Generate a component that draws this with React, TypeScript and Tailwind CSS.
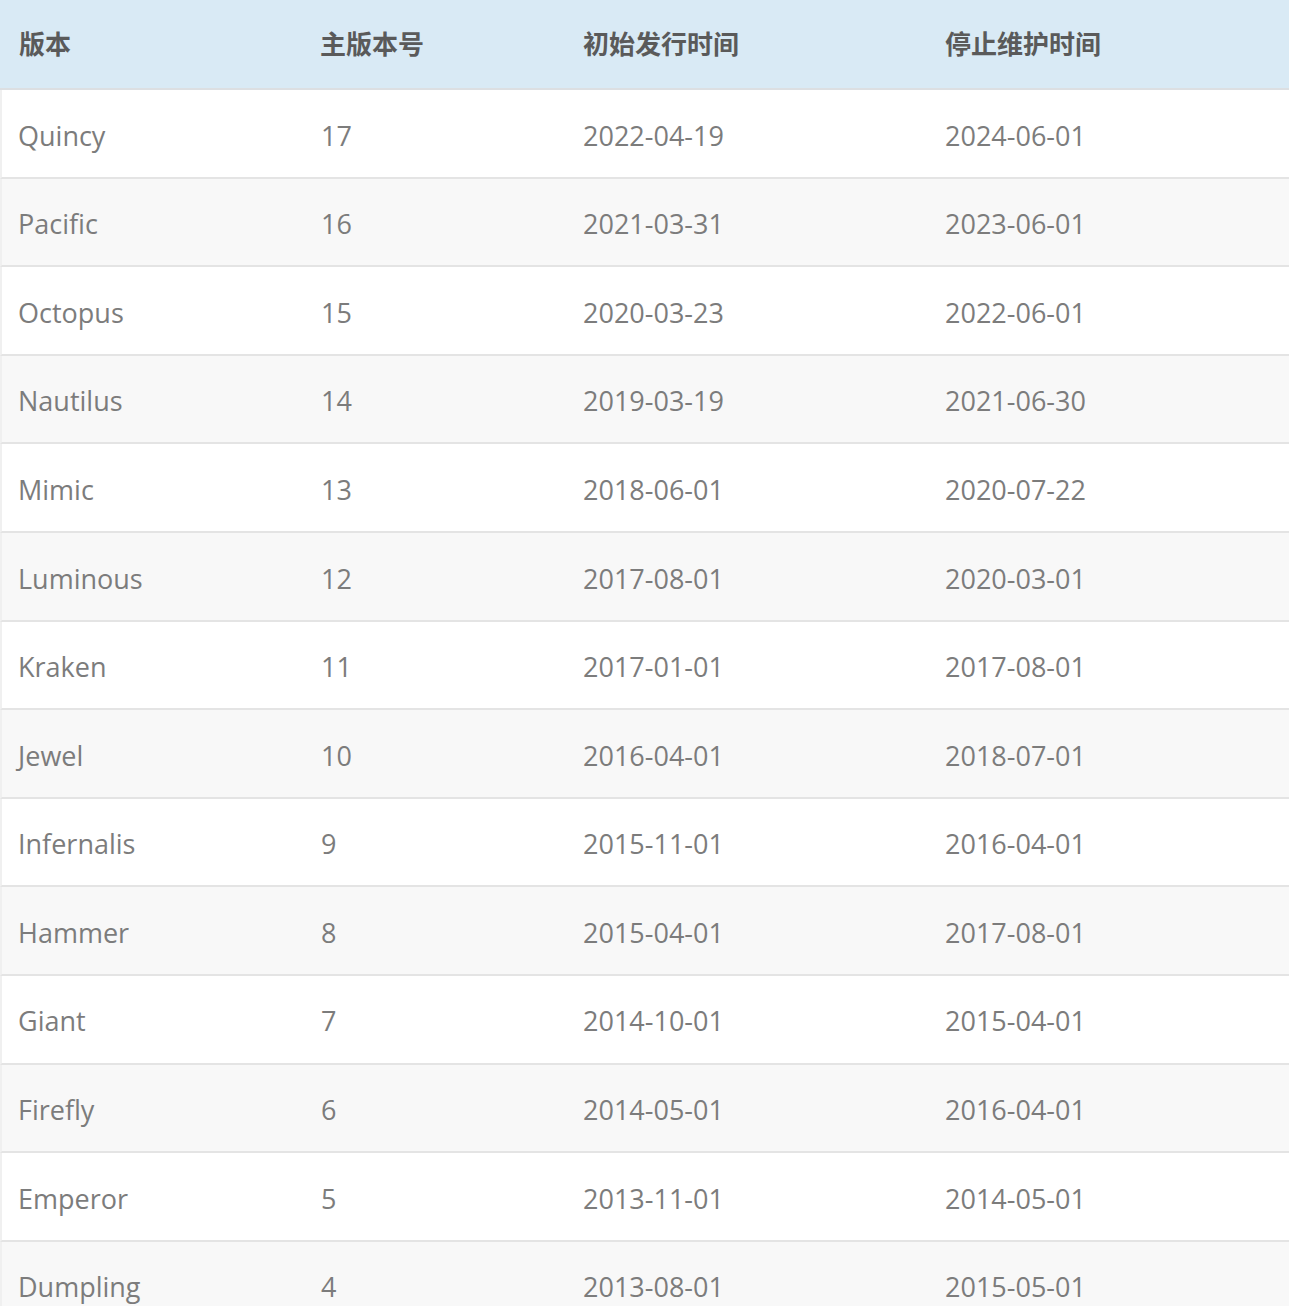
const rows: [string, string, string, string][] = [
  ["Quincy", "17", "2022-04-19", "2024-06-01"],
  ["Pacific", "16", "2021-03-31", "2023-06-01"],
  ["Octopus", "15", "2020-03-23", "2022-06-01"],
  ["Nautilus", "14", "2019-03-19", "2021-06-30"],
  ["Mimic", "13", "2018-06-01", "2020-07-22"],
  ["Luminous", "12", "2017-08-01", "2020-03-01"],
  ["Kraken", "11", "2017-01-01", "2017-08-01"],
  ["Jewel", "10", "2016-04-01", "2018-07-01"],
  ["Infernalis", "9", "2015-11-01", "2016-04-01"],
  ["Hammer", "8", "2015-04-01", "2017-08-01"],
  ["Giant", "7", "2014-10-01", "2015-04-01"],
  ["Firefly", "6", "2014-05-01", "2016-04-01"],
  ["Emperor", "5", "2013-11-01", "2014-05-01"],
  ["Dumpling", "4", "2013-08-01", "2015-05-01"],
];

const cols = "grid grid-cols-[301px_263px_362px_1fr]";

export default function App() {
  return (
    <div className="w-[1289px] h-[1306px] overflow-hidden bg-white font-['Open_Sans','Noto_Sans_CJK_SC',sans-serif]">
      <div className={`${cols} h-[90px] items-center bg-[#d9eaf5] border-b-2 border-[#dcdfe2] text-[26px] font-bold text-[#5a5a5a]`}>
        <div className="pl-[19px]">版本</div>
        <div className="pl-[19px]">主版本号</div>
        <div className="pl-[19px]">初始发行时间</div>
        <div className="pl-[19px]">停止维护时间</div>
      </div>
      {rows.map((r, i) => (
        <div
          key={r[0]}
          className={`${cols} h-[88.6px] items-center pt-[5px] border-b-2 border-[#e4e4e4] border-l-2 border-l-[#f0f0f0] text-[27px] text-[#7c7c7c] ${
            i % 2 === 1 ? "bg-[#f8f8f8]" : "bg-white"
          }`}
        >
          <div className="pl-[16px]">{r[0]}</div>
          <div className="pl-[18px]">{r[1]}</div>
          <div className="pl-[17px]">{r[2]}</div>
          <div className="pl-[17px]">{r[3]}</div>
        </div>
      ))}
    </div>
  );
}
